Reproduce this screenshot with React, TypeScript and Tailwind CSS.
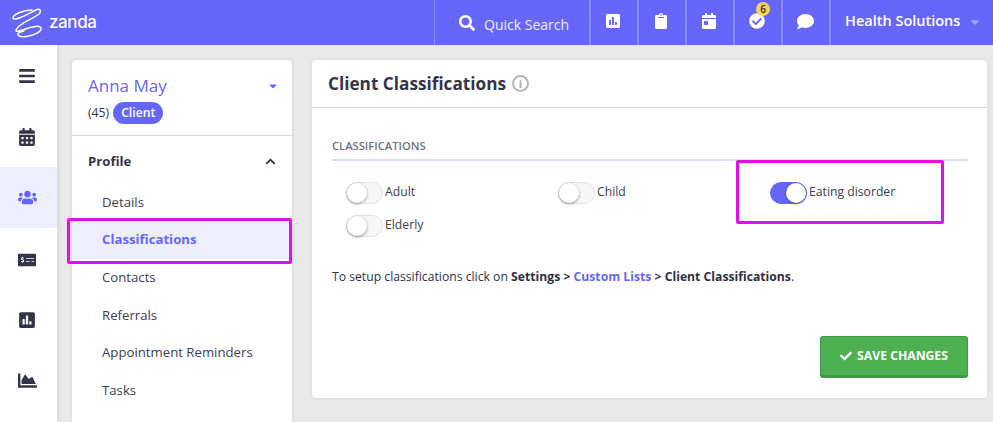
import { FaSearch, FaPoll, FaClipboard, FaCalendarAlt, FaCalendarDay, FaCheckCircle, FaComment, FaBars, FaUsers, FaMoneyCheckAlt, FaChartArea, FaChevronUp, FaCheck, FaCaretDown } from 'react-icons/fa';
import type { ReactNode } from 'react';

const FONT = "font-['Open_Sans',sans-serif]";

function ZandaLogo() {
    return (
        <svg width="32" height="32" viewBox="0 0 32 32" fill="none" stroke="#fff" strokeWidth="1.5" strokeLinecap="round" strokeLinejoin="round">
            <path d="M20 3C12 3 1 7 1 11C2 15 16 7 24 3C28 1 30 4 27 7C21 12 7 16 4 23C3 27 13 21 21 20C28 18 31 21 28 24C24 28 12 31 7 29C4 27 7 25 12 24" />
        </svg>
    );
}

function TopCell({ children }: { children: ReactNode }) {
    return (
        <div className="relative flex h-full w-12 items-center justify-center border-l-2 border-[#8c8bfc] pr-[2px] text-white">
            {children}
        </div>
    );
}

function TopBar() {
    return (
        <header className="flex h-[45px] shrink-0 items-center bg-[#6766fa]">
            <div className="flex items-center pl-[12px]">
                <ZandaLogo />
                <span className="ml-[5px] font-['Inter',sans-serif] text-[17px] font-medium tracking-[-0.4px] text-white">zanda</span>
            </div>
            <div className="ml-auto flex h-full">
                <div className="flex h-full w-[155px] items-center border-l border-[#8c8bfc] pl-6 text-white">
                    <FaSearch className="text-[16px]" />
                    <span className="ml-[9px] mt-[3px] text-[14px] text-[#eeeeff]">Quick Search</span>
                </div>
                <TopCell><FaPoll className="mb-[3px] text-[16px]" /></TopCell>
                <TopCell><FaClipboard className="mb-[3px] text-[16px]" /></TopCell>
                <TopCell><FaCalendarDay className="mb-[3px] text-[16px]" /></TopCell>
                <TopCell>
                    <FaCheckCircle className="mb-[3px] text-[16px]" />
                    <span className="absolute left-[21px] top-[2px] flex h-[14px] w-[14px] items-center justify-center rounded-full bg-[#f7d154] text-[10px] font-semibold text-[#333]">6</span>
                </TopCell>
                <TopCell><FaComment className="mb-[3px] text-[17px]" /></TopCell>
                <div className="flex h-full w-[164px] items-center border-l-2 border-[#8c8bfc] pl-[14px] text-white">
                    <span className="mb-[4px] text-[14.5px] font-semibold">Health Solutions</span>
                    <FaCaretDown className="mb-[1px] ml-[8px] text-[14px] text-[#a5a4fc]" />
                </div>
            </div>
        </header>
    );
}

const RAIL_ITEMS = [
    { icon: <FaBars className="text-[18px]" /> },
    { icon: <FaCalendarAlt className="text-[18px]" /> },
    { icon: <FaUsers className="text-[19px] text-[#6766fa]" />, active: true },
    { icon: <FaMoneyCheckAlt className="mt-[2px] text-[18px]" /> },
    { icon: <FaPoll className="text-[18px]" /> },
    { icon: <FaChartArea className="text-[19px]" /> },
];

function Rail() {
    return (
        <aside className="z-10 flex w-[57px] shrink-0 flex-col bg-white text-[#33344a] shadow-[2px_0_4px_rgba(0,0,0,0.08)]">
            {RAIL_ITEMS.map((item, idx) => (
                <div key={idx} className={`flex h-[61px] items-center justify-center pr-[3px] ${item.active ? 'bg-[#eeeffe]' : ''}`}>
                    {item.icon}
                </div>
            ))}
        </aside>
    );
}

const PROFILE_LINKS = ['Details', 'Classifications', 'Contacts', 'Referrals', 'Appointment Reminders', 'Tasks'];

function ClientCard() {
    return (
        <div className="relative mt-[15px] h-[400px] w-[220px] shrink-0 rounded-t-[4px] bg-white shadow-[0_0_4px_rgba(0,0,0,0.1)]">
            <div className="h-[76px] border-b border-[#d8d8d8] px-4 pt-[13px]">
                <div className="flex items-center justify-between">
                    <span className="text-[17px] font-medium leading-[26px] text-[#6766fa]">Anna May</span>
                    <FaCaretDown className="mr-[-3px] text-[12px] text-[#6766fa]" />
                </div>
                <div className="mt-[3px] flex items-center gap-[4px] text-[12.2px] text-[#33344a]">
                    <span>(45)</span>
                    <span className="flex h-[22px] items-center rounded-full bg-[#6766fa] px-2 font-semibold text-white">Client</span>
                </div>
            </div>
            <div className="flex h-[48px] items-center justify-between pl-4 pr-[16px] pt-[3px] text-[13.2px] font-bold text-[#33344a]">
                <span>Profile</span>
                <FaChevronUp className="text-[11px]" />
            </div>
            <nav className="flex flex-col text-[13.2px] text-[#3c3d52]">
                {PROFILE_LINKS.map((link) => (
                    <div
                        key={link}
                        className={`flex h-[37.6px] items-center pl-[30px] ${link === 'Classifications' ? 'bg-[#eeeffe] font-bold text-[#6766fa]' : ''}`}
                    >
                        {link}
                    </div>
                ))}
            </nav>
            {/* annotation round the active link */}
            <div className="absolute left-[-5px] top-[158px] h-[46px] w-[225px] rounded-[2px] border-[3px] border-[#e20fe8]" />
        </div>
    );
}

function Toggle({ on = false, label }: { on?: boolean; label: string }) {
    return (
        <div className="flex h-[33px] items-center">
            <span
                className={`flex h-[22px] w-[37px] rounded-full border ${on ? 'justify-end border-[#6766fa] bg-[#6766fa]' : 'border-[#e4e4e4] bg-[#f7f7f7]'}`}
            >
                <span className="h-[20px] w-[20px] rounded-full bg-white shadow-[0_1px_3px_rgba(0,0,0,0.4)]" />
            </span>
            <span className="ml-[2px] text-[12.2px] text-[#3c3d52]">{label}</span>
        </div>
    );
}

function ClassificationsCard() {
    return (
        <section className="relative mt-[15px] h-[338px] w-[675px] rounded-[4px] bg-white shadow-[0_0_4px_rgba(0,0,0,0.08)]">
            <div className="flex h-[48px] items-center border-b border-[#d8d8d8] pl-4">
                <h1 className="text-[17.2px] font-bold text-[#33344a]">Client Classifications</h1>
                <span className="ml-[6px] flex h-[17px] w-[17px] items-center justify-center rounded-full border-2 border-[#b5b5b5] text-[11px] font-bold leading-none text-[#a8a8a8]">i</span>
            </div>
            <div className="pl-5 pr-[19px]">
                <div className="mt-[30px] border-b-2 border-[#d5e0ef] pb-[5px] text-[11.2px] font-semibold leading-[16px] text-[#6f7280]">CLASSIFICATIONS</div>
                <div className="ml-[14px] mt-[15px] grid grid-cols-[212px_212px_1fr]">
                    <Toggle label="Adult" />
                    <Toggle label="Child" />
                    <Toggle on label="Eating disorder" />
                    <Toggle label="Elderly" />
                </div>
                <p className="mt-[26px] text-[12.2px] leading-[18px] text-[#2f3044]">
                    To setup classifications click on <b>Settings</b> <b>&gt;</b> <b className="text-[#6766fa]">Custom Lists</b> <b>&gt;</b> <b>Client Classifications</b>.
                </p>
                <div className="mt-[50px] flex justify-end">
                    <button className="flex h-[42px] w-[148px] items-center justify-center gap-[5px] rounded-[3px] border border-[#3f9a43] border-b-[3px] bg-[#4caf50] text-[12.2px] font-bold text-white">
                        <FaCheck className="text-[12px]" />
                        SAVE CHANGES
                    </button>
                </div>
            </div>
            {/* annotation round the switched-on toggle */}
            <div className="absolute left-[424px] top-[100px] h-[64px] w-[208px] rounded-[2px] border-[3px] border-[#e20fe8]" />
        </section>
    );
}

export default function App() {
    return (
        <div className={`flex h-[422px] w-[993px] flex-col overflow-hidden bg-[#e9e9e9] ${FONT}`}>
            <TopBar />
            <div className="flex min-h-0 flex-1">
                <Rail />
                <main className="flex gap-5 pl-[15px]">
                    <ClientCard />
                    <ClassificationsCard />
                </main>
            </div>
        </div>
    );
}
